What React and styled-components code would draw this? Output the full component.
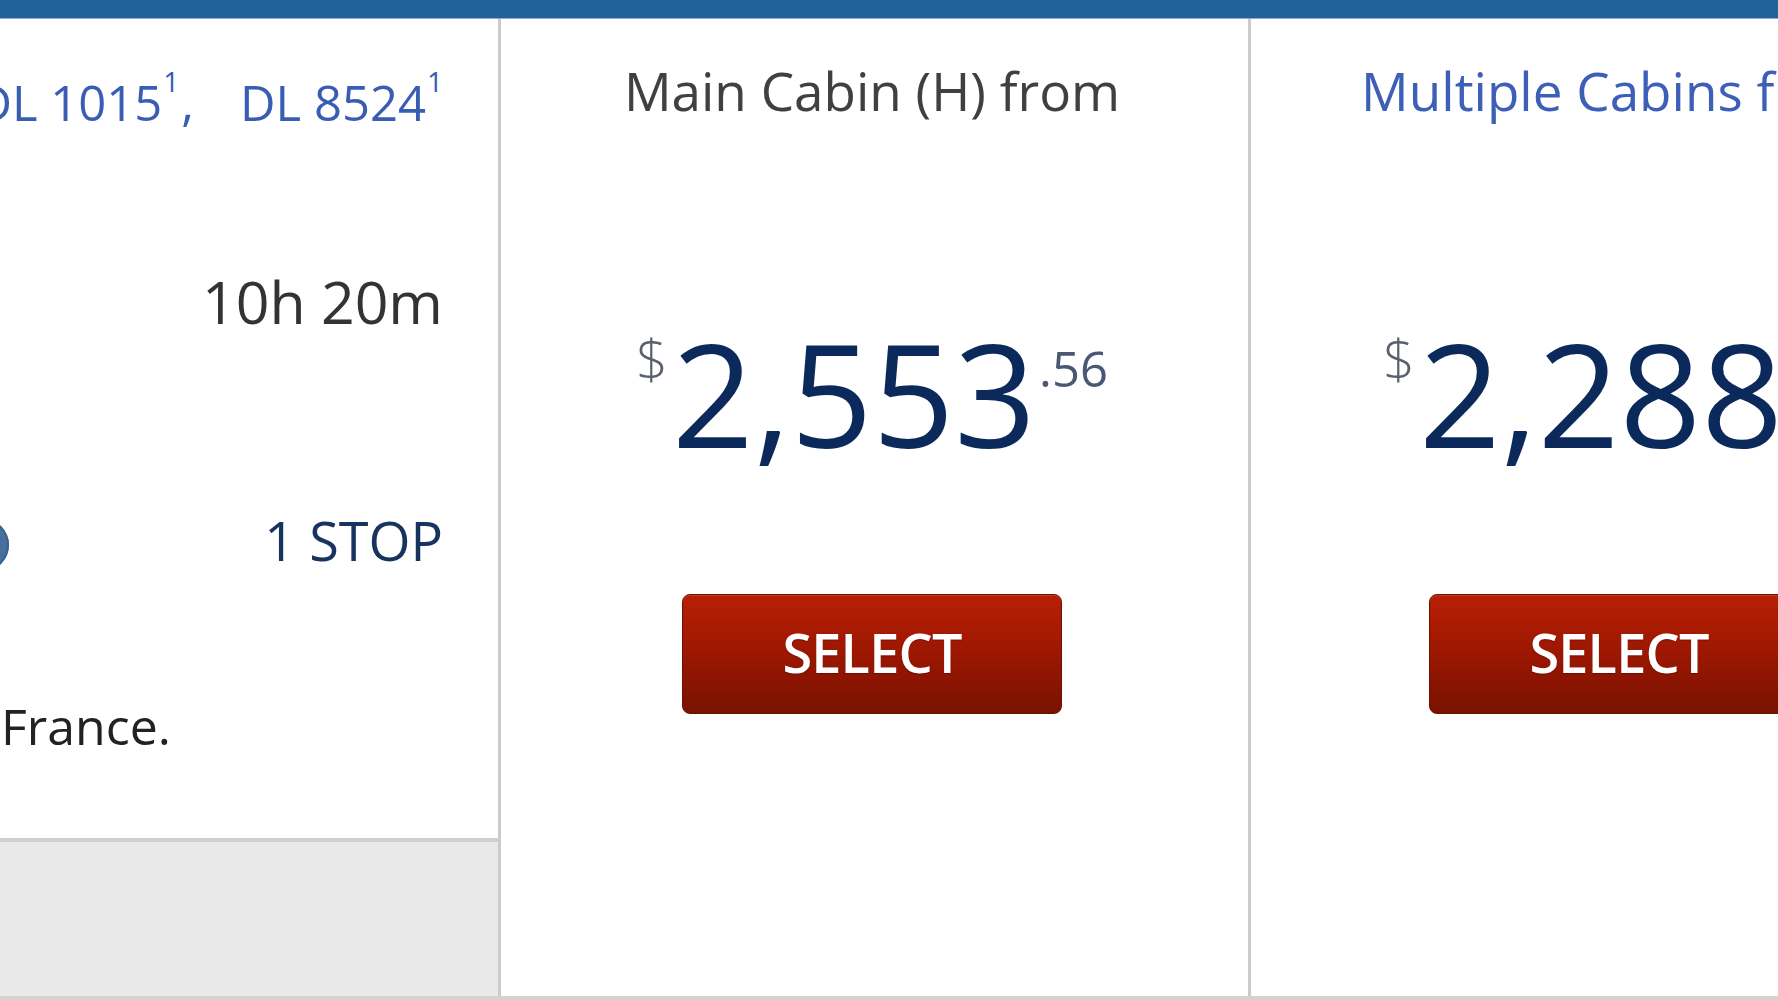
import React from 'react';
import styled, { createGlobalStyle } from 'styled-components';

const GlobalStyle = createGlobalStyle`
  html, body {
    margin: 0;
    padding: 0;
    background: #ffffff;
  }
  body {
    width: 1778px;
    height: 1000px;
    overflow: hidden;
    font-family: "Open Sans", "Liberation Sans", sans-serif;
  }
  #root {
    width: 1778px;
    height: 1000px;
  }
`;

const Page = styled.div`
  width: 1778px;
  height: 1000px;
  display: flex;
  flex-direction: column;
  overflow: hidden;
  background: #ffffff;
`;

const TopBar = styled.div`
  flex: none;
  height: 18px;
  background: #22629a;
  border-bottom: 1px solid #8eaac8;
`;

const Results = styled.div`
  flex: 1;
  min-height: 0;
  display: grid;
  grid-template-columns: 501px 750px 744px;
  border-bottom: 4px solid #d3d3d3;
`;

const FlightColumn = styled.div`
  display: flex;
  flex-direction: column;
  border-right: 3px solid #cbcbcb;
  min-width: 0;
`;

const FlightDetails = styled.div`
  flex: 1;
  display: flex;
  flex-direction: column;
  padding: 48px 55px 0 0;
`;

const FlightNumbers = styled.div`
  display: flex;
  justify-content: flex-end;
  white-space: nowrap;
  font-size: 49px;
  line-height: 70px;
  color: #3a5db4;
`;

const FlightLink = styled.span`
  flex: none;
  color: #3a5db4;
`;

const Footnote = styled.sup`
  font-size: 28px;
  line-height: 0;
  vertical-align: 29px;
  margin-left: 1px;
`;

const Separator = styled.span`
  flex: none;
  margin: 0 46px 0 2px;
`;

const Duration = styled.div`
  margin-top: 124px;
  text-align: right;
  font-size: 59px;
  line-height: 80px;
  color: #333333;
`;

const StopsRow = styled.div`
  margin-top: 163px;
  height: 72px;
  display: flex;
  align-items: center;
  justify-content: space-between;
`;

const StopDot = styled.span`
  flex: none;
  width: 52px;
  height: 52px;
  margin: 9px 0 0 -43px;
  border-radius: 50%;
  background: #47709f;
  box-shadow: inset 0 0 0 2px #3a6290;
`;

const StopLabel = styled.span`
  font-size: 54px;
  line-height: 72px;
  color: #17345f;
`;

const Note = styled.div`
  margin: 115px 0 0 1px;
  font-size: 50px;
  line-height: 70px;
  color: #222222;
  white-space: nowrap;
`;

const FlightFooter = styled.div`
  flex: none;
  box-sizing: border-box;
  height: 158px;
  border-top: 4px solid #cfcfcf;
  background: #e9e9e9;
`;

const FareColumn = styled.div`
  display: flex;
  flex-direction: column;
  align-items: center;
  padding: 36px 5px 0 0;
  border-right: 3px solid #cbcbcb;
  min-width: 0;
`;

const FareTitle = styled.div`
  font-size: 53px;
  line-height: 72px;
  white-space: nowrap;
  color: ${(p) => (p.$link ? '#3d5fb7' : '#404040')};
`;

const Price = styled.div`
  margin-top: 195px;
  display: flex;
  align-items: flex-start;
  white-space: nowrap;
`;

const Currency = styled.span`
  margin: 7px 4px 0 0;
  font-size: 56px;
  line-height: 56px;
  font-weight: 300;
  color: #5a616e;
`;

const Amount = styled.span`
  font-size: 143px;
  line-height: 142px;
  color: #0b2a5b;
`;

const Cents = styled.span`
  margin: 22px 0 0 3px;
  font-size: 49px;
  line-height: 49px;
  color: #4a5875;
`;

const SelectButton = styled.button`
  margin-top: 130px;
  width: 380px;
  height: 120px;
  box-sizing: border-box;
  padding: 0 0 6px;
  border: 1px solid #6e1000;
  border-radius: 8px;
  background: linear-gradient(to bottom, #b81f04 0%, #9c1702 50%, #781200 100%);
  box-shadow: inset 0 1px 0 rgba(255, 255, 255, 0.12);
  color: #ffffff;
  font-family: "Open Sans", "Liberation Sans", sans-serif;
  font-size: 54px;
  font-weight: 600;
  line-height: 114px;
  letter-spacing: -0.8px;
  text-shadow: 0 1px 1px rgba(60, 0, 0, 0.45);
  cursor: pointer;
`;

const fares = [
  { title: 'Main Cabin (H) from', link: false, whole: '2,553', cents: '.56' },
  { title: 'Multiple Cabins from', link: true, whole: '2,288', cents: '.90' },
];

export default function App() {
  return (
    <>
      <GlobalStyle />
      <Page>
        <TopBar />
        <Results>
          <FlightColumn>
            <FlightDetails>
              <FlightNumbers>
                <FlightLink>
                  DL 1015<Footnote>1</Footnote>
                </FlightLink>
                <Separator>,</Separator>
                <FlightLink>
                  DL 8524<Footnote>1</Footnote>
                </FlightLink>
              </FlightNumbers>
              <Duration>10h 20m</Duration>
              <StopsRow>
                <StopDot />
                <StopLabel>1 STOP</StopLabel>
              </StopsRow>
              <Note>France.</Note>
            </FlightDetails>
            <FlightFooter />
          </FlightColumn>
          {fares.map((f) => (
            <FareColumn key={f.title}>
              <FareTitle $link={f.link}>{f.title}</FareTitle>
              <Price>
                <Currency>$</Currency>
                <Amount>{f.whole}</Amount>
                <Cents>{f.cents}</Cents>
              </Price>
              <SelectButton type="button">SELECT</SelectButton>
            </FareColumn>
          ))}
        </Results>
      </Page>
    </>
  );
}
